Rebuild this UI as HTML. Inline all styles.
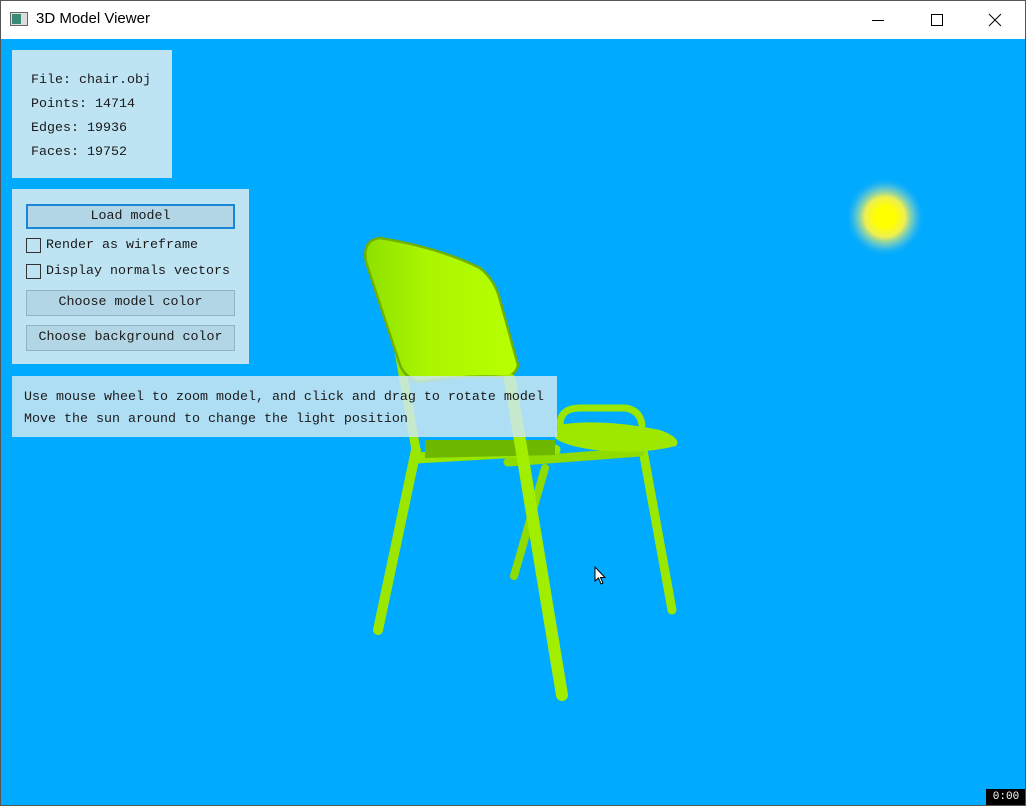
<!DOCTYPE html>
<html><head><style>
body{margin:0;width:1026px;height:806px;overflow:hidden;position:relative;background:#00aaff;font-family:"Liberation Mono",monospace;}
.title{position:absolute;left:0;top:0;width:1026px;height:39px;background:#fff;font-family:"Liberation Sans",sans-serif;font-size:15px;color:#000;}
.title span{position:absolute;left:36px;top:10px;}
.panel{position:absolute;background:rgba(200,230,242,0.95);font-size:13.33px;color:#1a1a1a;}
.btn{position:absolute;left:14px;width:209px;height:24px;background:#b2d6e6;border:1px solid #8fb2c4;box-sizing:border-box;text-align:center;line-height:22px;}
.cb{position:absolute;left:14px;width:15px;height:15px;border:1px solid #333;box-sizing:border-box;}
.lbl{position:absolute;left:34px;}
</style></head><body>
<div class="title">
<svg style="position:absolute;left:10px;top:12px" width="18" height="14"><rect x="0.5" y="0.5" width="17" height="13" fill="#ddd" stroke="#666"/><rect x="2" y="2" width="9" height="10" fill="#3a8a7a"/></svg>
<span>3D Model Viewer</span>
<svg style="position:absolute;left:870px;top:10px" width="140" height="20" fill="none" stroke="#000" stroke-width="1"><line x1="2" y1="10.5" x2="14" y2="10.5"/><rect x="61.5" y="4.5" width="11" height="11"/><line x1="119" y1="4" x2="131" y2="16"/><line x1="131" y1="4" x2="119" y2="16"/></svg>
</div>
<svg style="position:absolute;left:0;top:39px" width="1026" height="767" viewBox="0 39 1026 767">
<defs><radialGradient id="sun"><stop offset="0.25" stop-color="#ffff00"/><stop offset="0.5" stop-color="#eef050"/><stop offset="0.75" stop-color="#80cfc0" stop-opacity="0.6"/><stop offset="1" stop-color="#00aaff" stop-opacity="0"/></radialGradient>
<linearGradient id="bk" x1="0" x2="1"><stop offset="0" stop-color="#8fe000"/><stop offset="0.4" stop-color="#aaf500"/><stop offset="1" stop-color="#b8ff00"/></linearGradient></defs>
<circle cx="885" cy="217" r="40" fill="url(#sun)"/>
<g stroke-linecap="round" fill="none">
<line x1="545" y1="468" x2="514" y2="576" stroke="#8fdc00" stroke-width="8"/>
<line x1="643" y1="450" x2="672" y2="610" stroke="#9ae800" stroke-width="9"/>
<path d="M560 425 Q560 408 580 408 L625 408 Q640 410 642 425" stroke="#9ae800" stroke-width="7"/>
<line x1="416" y1="458" x2="555" y2="450" stroke="#96e600" stroke-width="11"/>
<line x1="508" y1="462" x2="640" y2="452" stroke="#8fdc00" stroke-width="9"/>
<line x1="416" y1="450" x2="378" y2="630" stroke="#9ae800" stroke-width="10"/>
<path d="M392 310 L416 450" stroke="#9ae800" stroke-width="9"/>
</g>
<path d="M558 425 Q600 418 660 430 Q682 438 676 446 Q640 455 595 450 Q565 446 555 438 Z" fill="#9ee800"/>
<path d="M425 440 L555 440 L555 455 L425 458 Z" fill="#6fb800"/>
<path d="M380 238 Q440 248 480 268 Q495 280 500 300 L518 365 Q516 375 505 377 Q460 375 420 382 Q405 378 400 365 L366 262 Q362 240 380 238 Z" fill="url(#bk)" stroke="#6fb000" stroke-width="2.5"/>
<line x1="510" y1="380" x2="562" y2="695" stroke="#a2ee00" stroke-width="12" stroke-linecap="round"/>
</svg>
<div class="panel" style="left:12px;top:50px;width:160px;height:128px;">
<div style="position:absolute;left:19px;top:19px;line-height:24px">File: chair.obj<br>Points: 14714<br>Edges: 19936<br>Faces: 19752</div></div>
<div class="panel" style="left:12px;top:189px;width:237px;height:175px;">
<div class="btn" style="top:15px;height:25px;border:2px solid #1a86d8;line-height:21px">Load model</div>
<div class="cb" style="top:49px"></div><div class="lbl" style="top:49px">Render as wireframe</div>
<div class="cb" style="top:75px"></div><div class="lbl" style="top:75px">Display normals vectors</div>
<div class="btn" style="top:101px;height:26px;line-height:24px">Choose model color</div>
<div class="btn" style="top:136px;height:26px;line-height:24px">Choose background color</div>
</div>
<div class="panel" style="left:12px;top:376px;width:545px;height:61px;background:rgba(205,232,242,0.85)">
<div style="position:absolute;left:12px;top:11px;line-height:22px">Use mouse wheel to zoom model, and click and drag to rotate model<br>Move the sun around to change the light position</div></div>
<svg style="position:absolute;left:594px;top:566px" width="14" height="20"><path d="M1 1 L1 15 L4.5 12 L7 18 L9 17 L6.5 11.5 L11 11.5 Z" fill="#fff" stroke="#000"/></svg>
<div style="position:absolute;left:986px;top:789px;width:40px;height:17px;background:#000;color:#fff;font-size:11px;line-height:17px;text-align:center">0:00</div>
<div style="position:absolute;left:0;top:0;width:1024px;height:804px;border:1px solid #555"></div>
</body></html>
